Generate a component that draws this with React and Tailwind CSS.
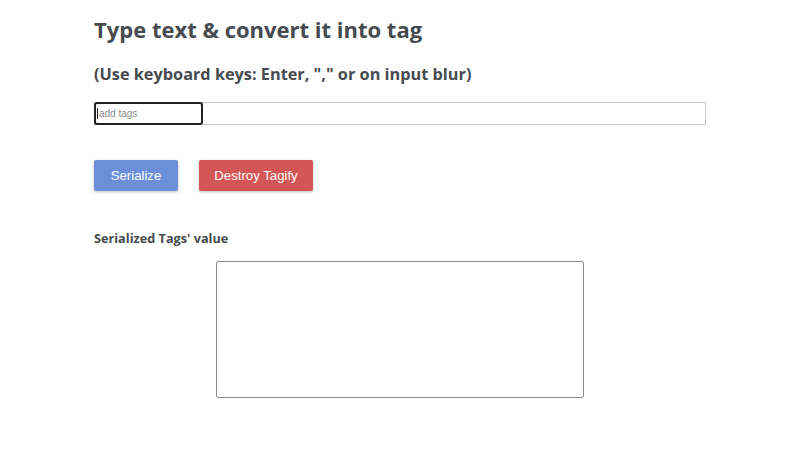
export default function App() {
  return (
    <div className="w-[800px] h-[450px] bg-white overflow-hidden">
      <div className="w-[612px] mx-auto flex flex-col text-[#464b4f]">
        <h1 className="mt-[13px] text-[22px] leading-[32px] font-bold font-['Open_Sans',sans-serif]">Type text &amp; convert it into tag</h1>
        <h2 className="mt-[17px] text-[16.3px] leading-[24px] font-bold font-['Open_Sans',sans-serif]">(Use keyboard keys: Enter, "," or on input blur)</h2>
        <div className="mt-[16px] h-[23px] border border-[#c8c8c8] flex items-stretch">
          <div className="-m-px w-[109px] h-[23px] border-2 border-[#222] rounded-[3px] flex items-center pl-[1px] text-[10px] text-[#8a8a8a] font-['Liberation_Sans',sans-serif]">
            <span className="border-l border-[#222] pl-[1px] leading-[11px]">add tags</span>
          </div>
        </div>
        <div className="mt-[35px] flex gap-[21px] font-['Liberation_Sans',sans-serif] text-[13.2px] text-white">
          <div className="w-[84px] h-[31px] pt-[1px] rounded-[2px] bg-[#6b8fd8] flex items-center justify-center shadow-[0_1px_3px_rgba(0,0,0,0.25)]">Serialize</div>
          <div className="w-[114px] h-[31px] pt-[1px] rounded-[2px] bg-[#d45555] flex items-center justify-center shadow-[0_1px_3px_rgba(0,0,0,0.25)]">Destroy Tagify</div>
        </div>
        <div className="mt-[38px] text-[12.7px] leading-[18px] font-bold font-['Open_Sans',sans-serif]">Serialized Tags' value</div>
        <div className="mt-[14px] self-center w-[368px] h-[137px] border border-[#8a8a8a] rounded-[2px]"></div>
      </div>
    </div>
  );
}
